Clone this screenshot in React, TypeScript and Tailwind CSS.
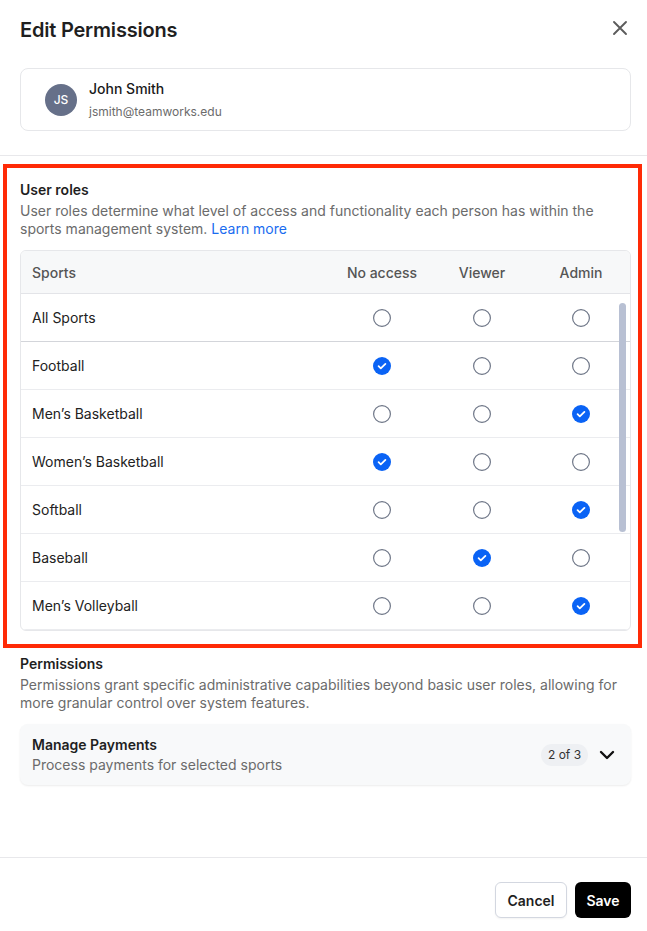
import React from "react";
import { ChevronDown } from "lucide-react";

type Role = "none" | "viewer" | "admin" | null;

const sports: { name: string; role: Role }[] = [
  { name: "All Sports", role: null },
  { name: "Football", role: "none" },
  { name: "Men’s Basketball", role: "admin" },
  { name: "Women’s Basketball", role: "none" },
  { name: "Softball", role: "admin" },
  { name: "Baseball", role: "viewer" },
  { name: "Men’s Volleyball", role: "admin" },
];

const Radio = ({ checked }: { checked: boolean }) =>
  checked ? (
    <svg width="18" height="18" viewBox="0 0 18 18">
      <circle cx="9" cy="9" r="9" fill="#0a63f5" />
      <path
        d="M5.6 9.2l2.2 2.1 4.6-4.4"
        fill="none"
        stroke="#fff"
        strokeWidth="1.8"
        strokeLinecap="round"
        strokeLinejoin="round"
      />
    </svg>
  ) : (
    <svg width="18" height="18" viewBox="0 0 18 18">
      <circle cx="9" cy="9" r="8.4" fill="#fff" stroke="#6e7687" strokeWidth="1.2" />
    </svg>
  );

const App = () => {
  return (
    <div className="h-[931px] w-full flex flex-col bg-white text-[#1f1f1f] font-['Inter',sans-serif]">
      {/* header */}
      <div className="pl-5 pr-4 pt-4">
        <div className="flex items-center justify-between">
          <h1 className="text-[20px] leading-7 font-semibold tracking-[-0.01em]">Edit Permissions</h1>
          <button className="mr-[3px] -mt-[4px] text-[#555]">
            <svg width="16" height="16" viewBox="0 0 16 16">
              <path d="M2 2l12 12M14 2L2 14" stroke="#5c5c5c" strokeWidth="1.9" strokeLinecap="round" />
            </svg>
          </button>
        </div>
        <div className="mt-6 h-[63px] rounded-lg border border-[#e6e7ea] flex items-center pl-6 gap-3">
          <div className="size-8 rounded-full bg-[#667089] flex items-center justify-center text-white text-[12px] font-medium">
            JS
          </div>
          <div className="flex flex-col">
            <span className="text-[14px] leading-5 font-medium text-[#1a1a1a] -mt-[1px]">John Smith</span>
            <span className="text-[12px] leading-4 text-[#6b6b6b] mt-[5px]">jsmith@teamworks.edu</span>
          </div>
        </div>
      </div>

      <div className="mt-6 border-t border-[#e8e8eb]" />

      {/* user roles */}
      <div className="relative pl-5 pr-4 pt-6">
        <div className="pointer-events-none absolute left-[3px] right-[5px] top-[8px] bottom-[-17px] border-4 border-[#ff2a06] z-10" />
        <h2 className="text-[14px] leading-5 font-semibold text-[#1f1f1f]">User roles</h2>
        <p className="mt-0.5 text-[14px] leading-[18px] text-[#6b6b6b]">
          User roles determine what level of access and functionality each person has within the
          sports management system. <span className="text-[#1a6cf0]">Learn more</span>
        </p>
        <div className="mt-3 rounded-md border border-[#e6e7ea] overflow-hidden">
          <div className="h-[43px] bg-[#f7f8f9] border-b border-[#e3e4e8] flex items-center text-[14px] font-medium text-[#555]">
            <div className="flex-1 pl-[11px]">Sports</div>
            <div className="w-[100px] text-center">No access</div>
            <div className="w-[100px] text-center">Viewer</div>
            <div className="w-[98px] text-center">Admin</div>
          </div>
          <div className="relative h-[336px] overflow-hidden">
            {sports.map((s, i) => (
              <div
                key={s.name}
                className={
                  i === 0
                    ? "h-12 flex items-center border-b border-[#d3d5da]"
                    : "h-12 flex items-center border-b border-[#ebecef]"
                }
              >
                <div className="flex-1 pl-[11px] text-[14px] text-[#222]">{s.name}</div>
                <div className="w-[100px] flex justify-center">
                  <Radio checked={s.role === "none"} />
                </div>
                <div className="w-[100px] flex justify-center">
                  <Radio checked={s.role === "viewer"} />
                </div>
                <div className="w-[98px] flex justify-center">
                  <Radio checked={s.role === "admin"} />
                </div>
              </div>
            ))}
            <div className="absolute right-[4px] top-[9px] h-[229px] w-[7px] rounded-full bg-[#b8c0d3]" />
          </div>
        </div>
      </div>

      {/* permissions */}
      <div className="pl-5 pr-4 mt-[23px]">
        <h2 className="text-[14px] leading-5 font-semibold text-[#1f1f1f]">Permissions</h2>
        <p className="mt-0.5 text-[14px] leading-[18px] text-[#6b6b6b]">
          Permissions grant specific administrative capabilities beyond basic user roles, allowing for
          more granular control over system features.
        </p>
        <div className="mt-3 h-[61px] rounded-lg bg-[#f8f9fa] shadow-[0_1px_2px_rgba(0,0,0,0.08)] flex items-center pl-3 pr-3">
          <div className="flex-1 flex flex-col">
            <span className="text-[14px] leading-5 font-semibold text-[#1f1f1f]">Manage Payments</span>
            <span className="text-[14px] leading-5 text-[#6b6b6b]">Process payments for selected sports</span>
          </div>
          <span className="h-[22px] w-[47px] text-center rounded-full bg-[#eef0f3] text-[12px] leading-[22px] text-[#333]">2 of 3</span>
          <ChevronDown className="ml-[7px] size-6 text-[#111]" strokeWidth={2.4} />
        </div>
      </div>

      <div className="flex-1" />

      {/* footer */}
      <div className="border-t border-[#e8e8eb] pl-5 pr-4 pt-6 pb-[13px] flex justify-end gap-2">
        <button className="h-9 w-[72px] rounded-md border border-[#d3d7e0] bg-white text-[14px] font-semibold text-[#1f1f1f] shadow-[0_1px_2px_rgba(0,0,0,0.05)]">
          Cancel
        </button>
        <button className="h-9 w-[56px] rounded-md bg-black text-[14px] font-semibold text-white">Save</button>
      </div>
    </div>
  );
};

export default App;
